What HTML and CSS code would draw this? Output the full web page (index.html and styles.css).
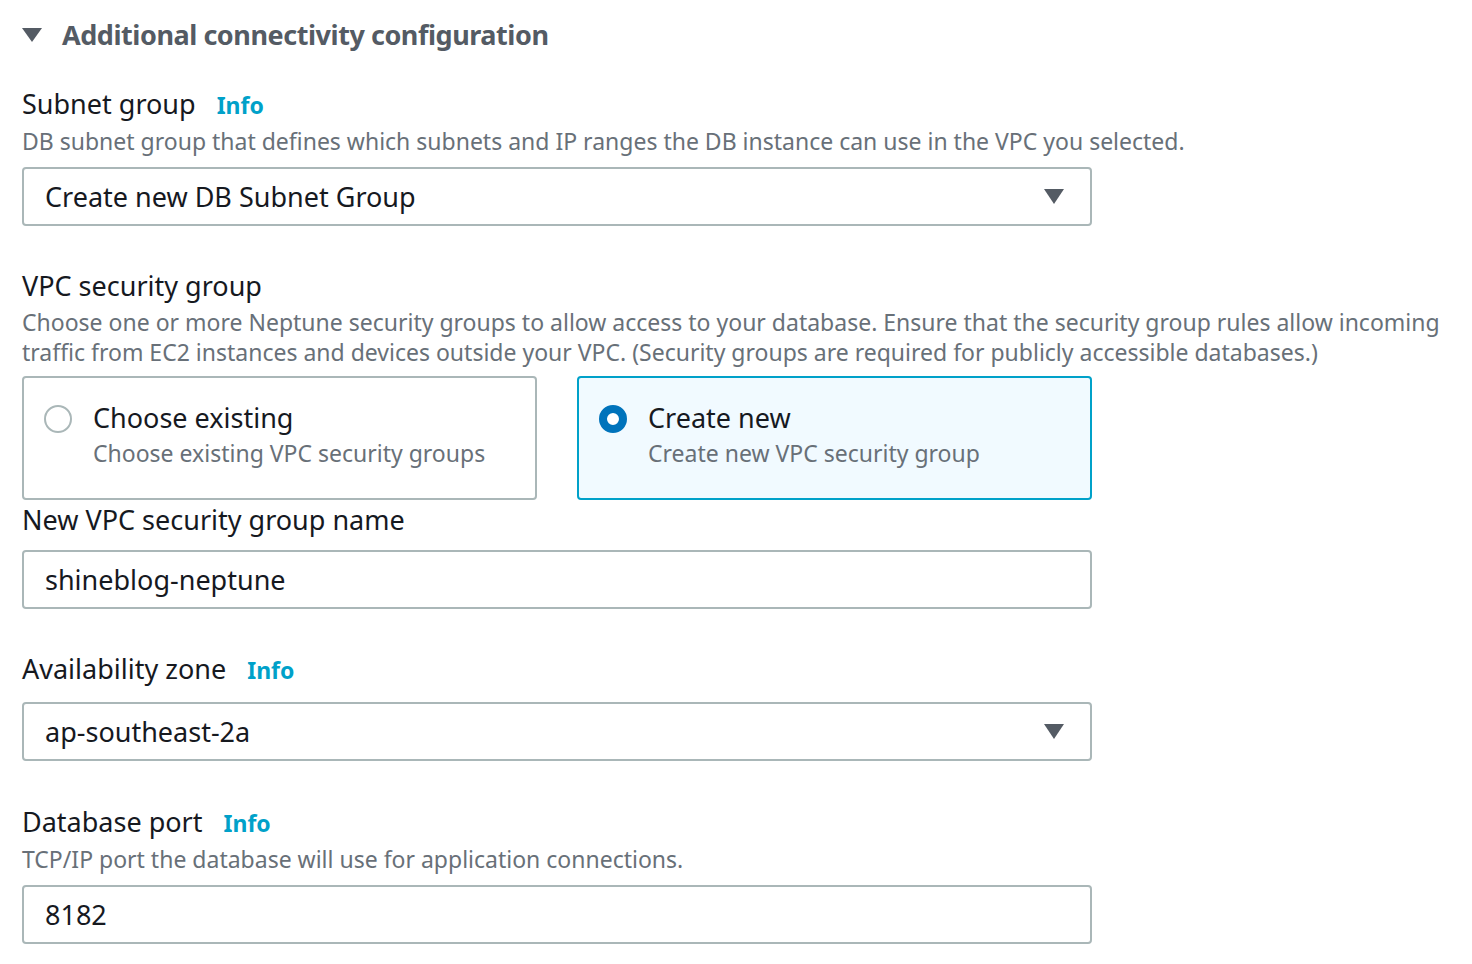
FILE: index.html
```html
<!DOCTYPE html>
<html lang="en">
<head>
<meta charset="utf-8">
<title>Additional connectivity configuration</title>
<link rel="stylesheet" href="styles.css">
</head>
<body>
<div class="page">
  <div class="section-head">
    <svg class="caret" width="20" height="14" viewBox="0 0 20 14"><path d="M0 0 H20 L10 14 Z" fill="#545b64"/></svg>
    <span class="section-title">Additional connectivity configuration</span>
  </div>

  <div class="field first">
    <div class="label">Subnet group <a class="info">Info</a></div>
    <div class="desc">DB subnet group that defines which subnets and IP ranges the DB instance can use in the VPC you selected.</div>
    <div class="control select">
      <span class="value">Create new DB Subnet Group</span>
      <svg class="arrow" width="20" height="15" viewBox="0 0 20 15"><path d="M0 0 H20 L10 15 Z" fill="#545b64"/></svg>
    </div>
  </div>

  <div class="field">
    <div class="label">VPC security group</div>
    <div class="desc wide">Choose one or more Neptune security groups to allow access to your database. Ensure that the security group rules allow incoming traffic from EC2 instances and devices outside your VPC. (Security groups are required for publicly accessible databases.)</div>
    <div class="tiles">
      <div class="tile">
        <span class="radio"></span>
        <div class="tile-text">
          <div class="tile-title">Choose existing</div>
          <div class="tile-sub">Choose existing VPC security groups</div>
        </div>
      </div>
      <div class="tile selected">
        <span class="radio on"></span>
        <div class="tile-text">
          <div class="tile-title">Create new</div>
          <div class="tile-sub">Create new VPC security group</div>
        </div>
      </div>
    </div>
  </div>

  <div class="field after-tiles">
    <div class="label">New VPC security group name</div>
    <div class="control input nodesc"><span class="value">shineblog-neptune</span></div>
  </div>

  <div class="field">
    <div class="label">Availability zone <a class="info">Info</a></div>
    <div class="control select nodesc-sel">
      <span class="value">ap-southeast-2a</span>
      <svg class="arrow" width="20" height="15" viewBox="0 0 20 15"><path d="M0 0 H20 L10 15 Z" fill="#545b64"/></svg>
    </div>
  </div>

  <div class="field last">
    <div class="label">Database port <a class="info">Info</a></div>
    <div class="desc">TCP/IP port the database will use for application connections.</div>
    <div class="control input"><span class="value">8182</span></div>
  </div>
</div>
</body>
</html>
```

FILE: styles.css
```css
* { box-sizing: border-box; }

html, body {
  margin: 0;
  padding: 0;
  background: #ffffff;
}

body {
  font-family: "Noto Sans", "Open Sans", sans-serif;
  color: #16191f;
}

.page {
  padding: 16px 22px 0 22px;
  width: 1460px;
}

.section-head {
  display: flex;
  align-items: center;
  height: 36px;
  margin-top: 1px;
}

.caret {
  margin-right: 20px;
  flex: none;
}

.section-title {
  font-size: 27px;
  font-weight: 700;
  line-height: 36px;
  letter-spacing: -0.45px;
  color: #545b64;
}

.field {
  width: 1430px;
  margin-top: 42px;
}

.field.first {
  margin-top: 33px;
}

.field.after-tiles {
  margin-top: 2px;
}

.field.last {
  margin-top: 43px;
}

.label {
  font-size: 27px;
  line-height: 36px;
  color: #16191f;
}

.info {
  font-size: 23px;
  font-weight: 700;
  color: #00a1c9;
  margin-left: 14px;
}

.desc {
  font-size: 23px;
  line-height: 30px;
  color: #687078;
  margin-top: 3px;
}

.control {
  width: 1070px;
  height: 59px;
  border: 2px solid #aab7b8;
  border-radius: 4px;
  display: flex;
  align-items: center;
  justify-content: space-between;
  padding: 0 26px 0 21px;
  margin-top: 11px;
  background: #fff;
}

.control.nodesc { margin-top: 12px; }
.control.nodesc-sel { margin-top: 14px; }

.value {
  font-size: 27px;
  color: #16191f;
}

.tiles {
  display: grid;
  grid-template-columns: 515px 515px;
  column-gap: 40px;
  margin-top: 9px;
}

.tile {
  height: 124px;
  border: 2px solid #aab7b8;
  border-radius: 4px;
  display: flex;
  align-items: flex-start;
  padding: 25px 20px 0 20px;
  background: #fff;
}

.tile.selected {
  border-color: #00a1c9;
  background: #f1faff;
}

.radio {
  flex: none;
  width: 28px;
  height: 28px;
  border-radius: 50%;
  border: 2px solid #aab7b8;
  background: #fff;
  margin-top: 2px;
  margin-right: 21px;
}

.radio.on {
  border: 8px solid #0073bb;
}

.tile-title {
  font-size: 27px;
  line-height: 36px;
  margin-top: -3px;
}

.tile-sub {
  font-size: 23px;
  line-height: 30px;
  color: #687078;
  margin-top: 2px;
}
```
